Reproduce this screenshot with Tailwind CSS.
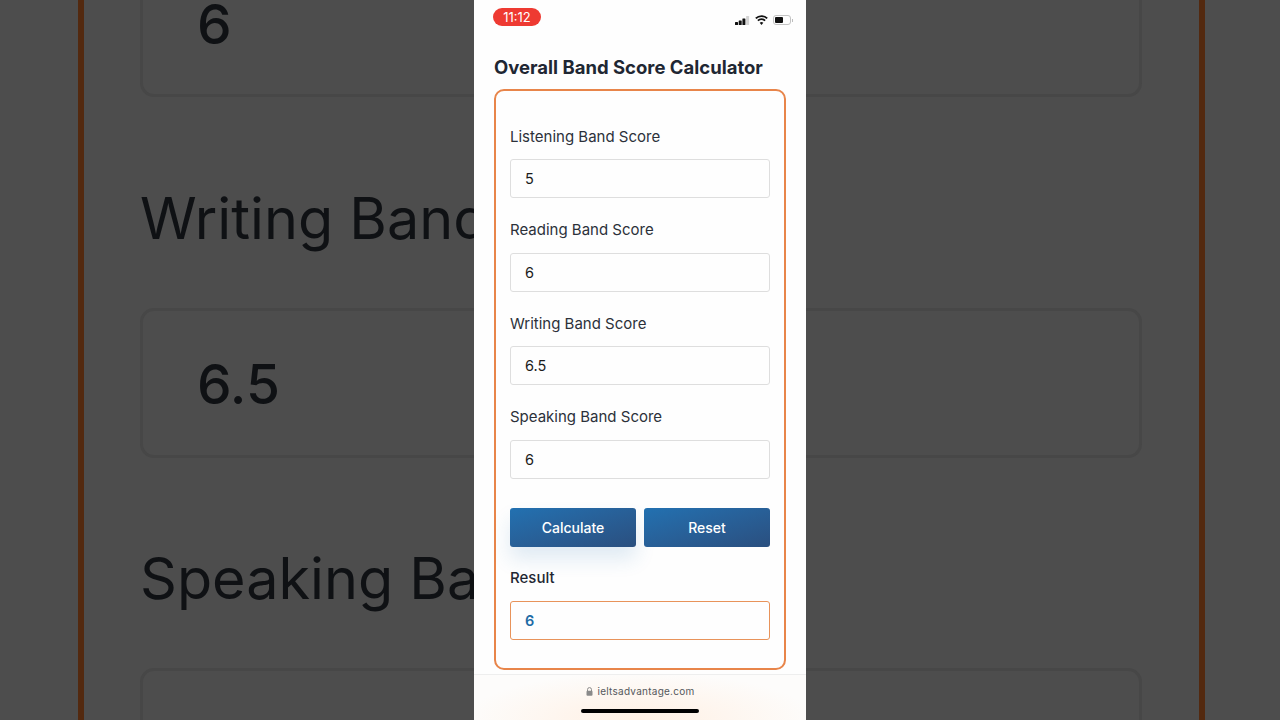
<!DOCTYPE html>
<html lang="en">
  <head>
    <title>Overall Band Score Calculator</title>
    <meta name="viewport" content="width=device-width, initial-scale=1" />
    <script src="https://cdn.jsdelivr.net/npm/@tailwindcss/browser@4"></script>
  </head>
  <body class="bg-[#4d4d4d] overflow-hidden font-[Inter,sans-serif]">
    <div class="relative w-[1280px] h-[720px] overflow-hidden">
      <!-- dimmed, enlarged copy of the page behind the phone video -->
      <div class="absolute inset-0 blur-[0.6px]">
        <div class="absolute left-[78px] top-[-100px] w-[1127px] h-[1000px] border-x-[6px] border-[#53290f]"></div>
        <div class="absolute left-[140px] top-[-60px] w-[1002px] h-[157px] rounded-[14px] border-[3px] border-[#474747] pl-[54px] pt-[51px] text-[55px] leading-[60px] font-medium text-[#0f1114]">6</div>
        <div class="absolute left-[140px] top-[182px] text-[57.5px] leading-[72px] text-[#0f1114] whitespace-nowrap">Writing Band Score</div>
        <div class="absolute left-[140px] top-[308px] w-[1002px] h-[150px] rounded-[14px] border-[3px] border-[#474747] pl-[54px] pt-[43px] text-[55px] leading-[60px] font-medium text-[#0f1114]">6.5</div>
        <div class="absolute left-[140px] top-[542px] text-[57.5px] leading-[72px] text-[#0f1114] whitespace-nowrap">Speaking Band Score</div>
        <div class="absolute left-[140px] top-[668px] w-[1002px] h-[150px] rounded-[14px] border-[3px] border-[#474747]"></div>
      </div>

      <!-- phone -->
      <main class="absolute left-[474px] top-0 w-[332px] h-[720px] bg-[#fefefe] flex flex-col">
        <div class="h-[54px] shrink-0 pl-[19px] pr-[13px] pt-[8px] flex justify-between items-start">
          <div class="w-[48px] h-[18px] rounded-full bg-[#ee3a32] text-white text-[13px] leading-[18px] text-center">11:12</div>
          <div class="flex items-center gap-[5px] mt-[7px]">
            <svg width="15" height="9" viewBox="0 0 15 9" fill="#111">
              <rect x="0" y="6" width="3" height="3" rx=".5" />
              <rect x="3.7" y="4.5" width="3" height="4.5" rx=".5" />
              <rect x="7.4" y="2.5" width="3" height="6.5" rx=".5" />
              <rect x="11.1" y="0" width="3" height="9" rx=".5" fill="#d4d4d4" />
            </svg>
            <svg width="13" height="10" viewBox="0 0 13 10" fill="none" stroke="#111" stroke-width="1.8">
              <path d="M.8 3.4a8.2 8.2 0 0 1 11.4 0" />
              <path d="M2.9 5.7a5.2 5.2 0 0 1 7.2 0" />
              <path d="M6.5 10 4.7 7.8a2.6 2.6 0 0 1 3.6 0z" fill="#111" stroke="none" />
            </svg>
            <div class="flex items-center">
              <div class="w-[18px] h-[10px] rounded-[3px] border border-[#c4c4c4] p-px">
                <div class="w-[8px] h-full rounded-[1px] bg-[#111]"></div>
              </div>
              <div class="w-px h-[3px] bg-[#bdbdbd] ml-px"></div>
            </div>
          </div>
        </div>

        <div class="px-[20px]">
          <h1 class="text-[18.5px] leading-[26px] font-bold text-[#1f2733] whitespace-nowrap">Overall Band Score Calculator</h1>
          <div class="mt-[9px] w-[292px] h-[581px] rounded-[10px] border-2 border-[#e8854a] px-[14px] pt-[33.5px]">
            <div class="flex flex-col gap-[20px]">
              <div>
                <label class="block text-[15px] leading-[24px] text-[#2c313a]">Listening Band Score</label>
                <div class="mt-[10.5px] h-[39px] rounded-[3px] border border-[#dedede] pl-[14px] text-[14.5px] leading-[38px] text-[#1c1c1c]">5</div>
              </div>
              <div>
                <label class="block text-[15px] leading-[24px] text-[#2c313a]">Reading Band Score</label>
                <div class="mt-[10.5px] h-[39px] rounded-[3px] border border-[#dedede] pl-[14px] text-[14.5px] leading-[38px] text-[#1c1c1c]">6</div>
              </div>
              <div>
                <label class="block text-[15px] leading-[24px] text-[#2c313a]">Writing Band Score</label>
                <div class="mt-[10.5px] h-[39px] rounded-[3px] border border-[#dedede] pl-[14px] text-[14.5px] leading-[38px] text-[#1c1c1c]">6.5</div>
              </div>
              <div>
                <label class="block text-[15px] leading-[24px] text-[#2c313a]">Speaking Band Score</label>
                <div class="mt-[10.5px] h-[39px] rounded-[3px] border border-[#dedede] pl-[14px] text-[14.5px] leading-[38px] text-[#1c1c1c]">6</div>
              </div>
            </div>
            <div class="mt-[29.5px] grid grid-cols-2 gap-[8px]">
              <button class="h-[39px] rounded-[3px] bg-linear-to-br from-[#2271b1] to-[#2a4f7f] text-white text-[14px] font-medium shadow-[0_12px_20px_rgba(34,113,177,0.14)]">Calculate</button>
              <button class="h-[39px] rounded-[3px] bg-linear-to-br from-[#2271b1] to-[#2a4f7f] text-white text-[14px] font-medium">Reset</button>
            </div>
            <div class="mt-[19px] text-[15px] leading-[24px] font-medium text-[#1f2733]">Result</div>
            <div class="mt-[11px] h-[39px] rounded-[3px] border border-[#e8935a] pl-[14px] text-[14.5px] leading-[38px] font-semibold text-[#1f6ca6]">6</div>
          </div>
        </div>

        <div class="mt-[4px] flex-1 border-t border-[#eeeeee] bg-[radial-gradient(ellipse_at_50%_100%,#fff0e3,#fdfcfb_75%)] flex flex-col items-center">
          <div class="mt-[9px] flex items-center gap-[5px] text-[10px] leading-[14px] tracking-[0.25px] text-[#55585c]">
            <svg width="7" height="9" viewBox="0 0 7 9" fill="#8a8a8a">
              <path d="M1.5 4V2.6a2 2 0 0 1 4 0V4" fill="none" stroke="#8a8a8a" />
              <rect x="0.5" y="3.8" width="6" height="5" rx="1" />
            </svg>
            <span>ieltsadvantage.com</span>
          </div>
          <div class="mt-[11px] w-[118px] h-[4px] rounded-full bg-black"></div>
        </div>
      </main>
    </div>
  </body>
</html>
